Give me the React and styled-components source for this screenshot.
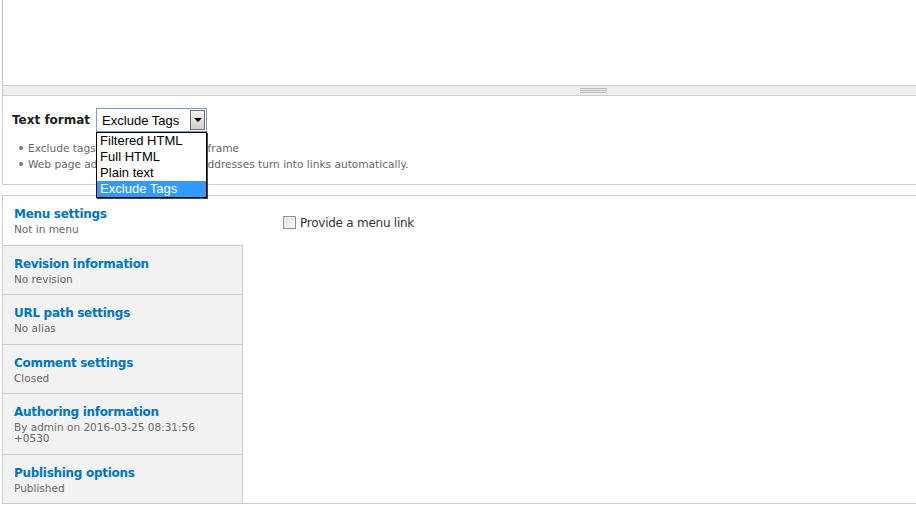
import React from "react";
import styled, { createGlobalStyle } from "styled-components";

const Global = createGlobalStyle`
  html, body { margin: 0; padding: 0; background: #fff; overflow: hidden; }
  body { font-family: "DejaVu Sans", Verdana, sans-serif; color: #333; }
`;

const Page = styled.div`
  padding-left: 2px;
  width: 1182px;
`;

const Editor = styled.div`
  height: 85px;
  border-left: 1px solid #c4c4c4;
  background: #fff;
`;

const Grippie = styled.div`
  height: 9px;
  background: #eee;
  border-top: 1px solid #ccc;
  border-bottom: 1px solid #ccc;
  border-left: 1px solid #c4c4c4;
`;

const GripLines = styled.div`
  width: 27px;
  height: 5px;
  margin: 2px auto 0;
  background: repeating-linear-gradient(to bottom, #bbb 0 1px, transparent 1px 2px);
`;

const FormatWrapper = styled.div`
  border-left: 1px solid #ccc;
  border-bottom: 1px solid #ccc;
  padding: 12px 0 12px 9px;
`;

const FormatRow = styled.div`
  display: flex;
  align-items: center;
  gap: 6px;
  height: 24px;
`;

const Label = styled.label`
  font-weight: bold;
  font-size: 12px;
  color: #222;
`;

const SelectWrap = styled.div`
  position: relative;
`;

const SelectBox = styled.div`
  box-sizing: border-box;
  width: 111px;
  height: 24px;
  border: 1px solid #7f9db9;
  background: #fff;
  display: flex;
  align-items: center;
  justify-content: space-between;
  padding: 0 1px 0 5px;
  font-family: "Liberation Sans", Arial, sans-serif;
  font-size: 13px;
  color: #000;
`;

const ArrowButton = styled.span`
  box-sizing: border-box;
  width: 15px;
  height: 20px;
  border: 1px solid #707070;
  background: linear-gradient(#f2f2f2, #d0d0d0);
  display: flex;
  align-items: center;
  justify-content: center;
  &::after {
    content: "";
    border-left: 4px solid transparent;
    border-right: 4px solid transparent;
    border-top: 4px solid #000;
  }
`;

const DropList = styled.ul`
  position: absolute;
  z-index: 5;
  top: 24px;
  left: 0;
  box-sizing: border-box;
  width: 111px;
  margin: 0;
  padding: 0;
  list-style: none;
  background: #fff;
  border: 1px solid #000;
  box-shadow: 1px 1px 0 #444;
  font-family: "Liberation Sans", Arial, sans-serif;
  font-size: 13px;
  color: #000;
`;

const Option = styled.li`
  height: 16px;
  line-height: 16px;
  padding-left: 3px;
  background: ${(p) => (p.$active ? "#3399ff" : "transparent")};
  color: ${(p) => (p.$active ? "#fff" : "#000")};
`;

const Tips = styled.ul`
  margin: 8px 0 0;
  padding: 0;
  list-style: none;
  font-size: 10.6px;
  line-height: 16px;
  color: #666;
`;

const Tip = styled.li`
  position: relative;
  padding-left: 16px;
  white-space: nowrap;
  &::before {
    content: "";
    position: absolute;
    left: 7px;
    top: 6px;
    width: 4px;
    height: 4px;
    border-radius: 50%;
    background: #777;
  }
`;

const VerticalTabs = styled.div`
  margin-top: 10px;
  display: flex;
  border-top: 1px solid #ccc;
  border-bottom: 1px solid #ccc;
  border-left: 1px solid #ccc;
`;

const TabList = styled.div`
  width: 240px;
  display: flex;
  flex-direction: column;
  border-right: 1px solid #ccc;
  box-sizing: border-box;
`;

const Tab = styled.div`
  background: ${(p) => (p.$selected ? "#fff" : "#f2f2f2")};
  margin-right: ${(p) => (p.$selected ? "-1px" : "0")};
  padding: 9px 12px 9.5px 11px;
  border-bottom: ${(p) => (p.$last ? "none" : "1px solid #ccc")};
`;

const TabTitle = styled.div`
  font-weight: bold;
  font-size: 12px;
  line-height: 19px;
  letter-spacing: -0.3px;
  color: #0074bd;
`;

const TabSummary = styled.div`
  font-size: 10.5px;
  line-height: 11px;
  color: #666;
`;

const Pane = styled.div`
  flex: 1;
  padding: 20px 40px;
`;

const CheckRow = styled.label`
  display: flex;
  align-items: center;
  gap: 4px;
  font-size: 12px;
  letter-spacing: -0.25px;
  color: #333;
`;

const CheckBox = styled.span`
  box-sizing: border-box;
  width: 13px;
  height: 13px;
  margin-top: -1px;
  border: 1px solid #8e8f8f;
  background: linear-gradient(135deg, #dcdcdc, #fbfbfb);
  box-shadow: inset 0 0 0 1px #f4f4f4;
`;

const tabs = [
  { title: "Menu settings", summary: "Not in menu" },
  { title: "Revision information", summary: "No revision" },
  { title: "URL path settings", summary: "No alias" },
  { title: "Comment settings", summary: "Closed" },
  { title: "Authoring information", summary: "By admin on 2016-03-25 08:31:56 +0530" },
  { title: "Publishing options", summary: "Published" },
];

const options = ["Filtered HTML", "Full HTML", "Plain text", "Exclude Tags"];

export default function App() {
  return (
    <>
      <Global />
      <Page>
        <Editor />
        <Grippie>
          <GripLines />
        </Grippie>
        <FormatWrapper>
          <FormatRow>
            <Label>Text format</Label>
            <SelectWrap>
              <SelectBox>
                <span>Exclude Tags</span>
                <ArrowButton />
              </SelectBox>
              <DropList>
                {options.map((o) => (
                  <Option key={o} $active={o === "Exclude Tags"}>
                    {o}
                  </Option>
                ))}
              </DropList>
            </SelectWrap>
          </FormatRow>
          <Tips>
            <Tip>Exclude tags: script, style, table, iframe</Tip>
            <Tip>Web page addresses and e-mail addresses turn into links automatically.</Tip>
          </Tips>
        </FormatWrapper>
        <VerticalTabs>
          <TabList>
            {tabs.map((t, i) => (
              <Tab key={t.title} $selected={i === 0} $last={i === tabs.length - 1}>
                <TabTitle>{t.title}</TabTitle>
                <TabSummary>{t.summary}</TabSummary>
              </Tab>
            ))}
          </TabList>
          <Pane>
            <CheckRow>
              <CheckBox />
              Provide a menu link
            </CheckRow>
          </Pane>
        </VerticalTabs>
      </Page>
    </>
  );
}
